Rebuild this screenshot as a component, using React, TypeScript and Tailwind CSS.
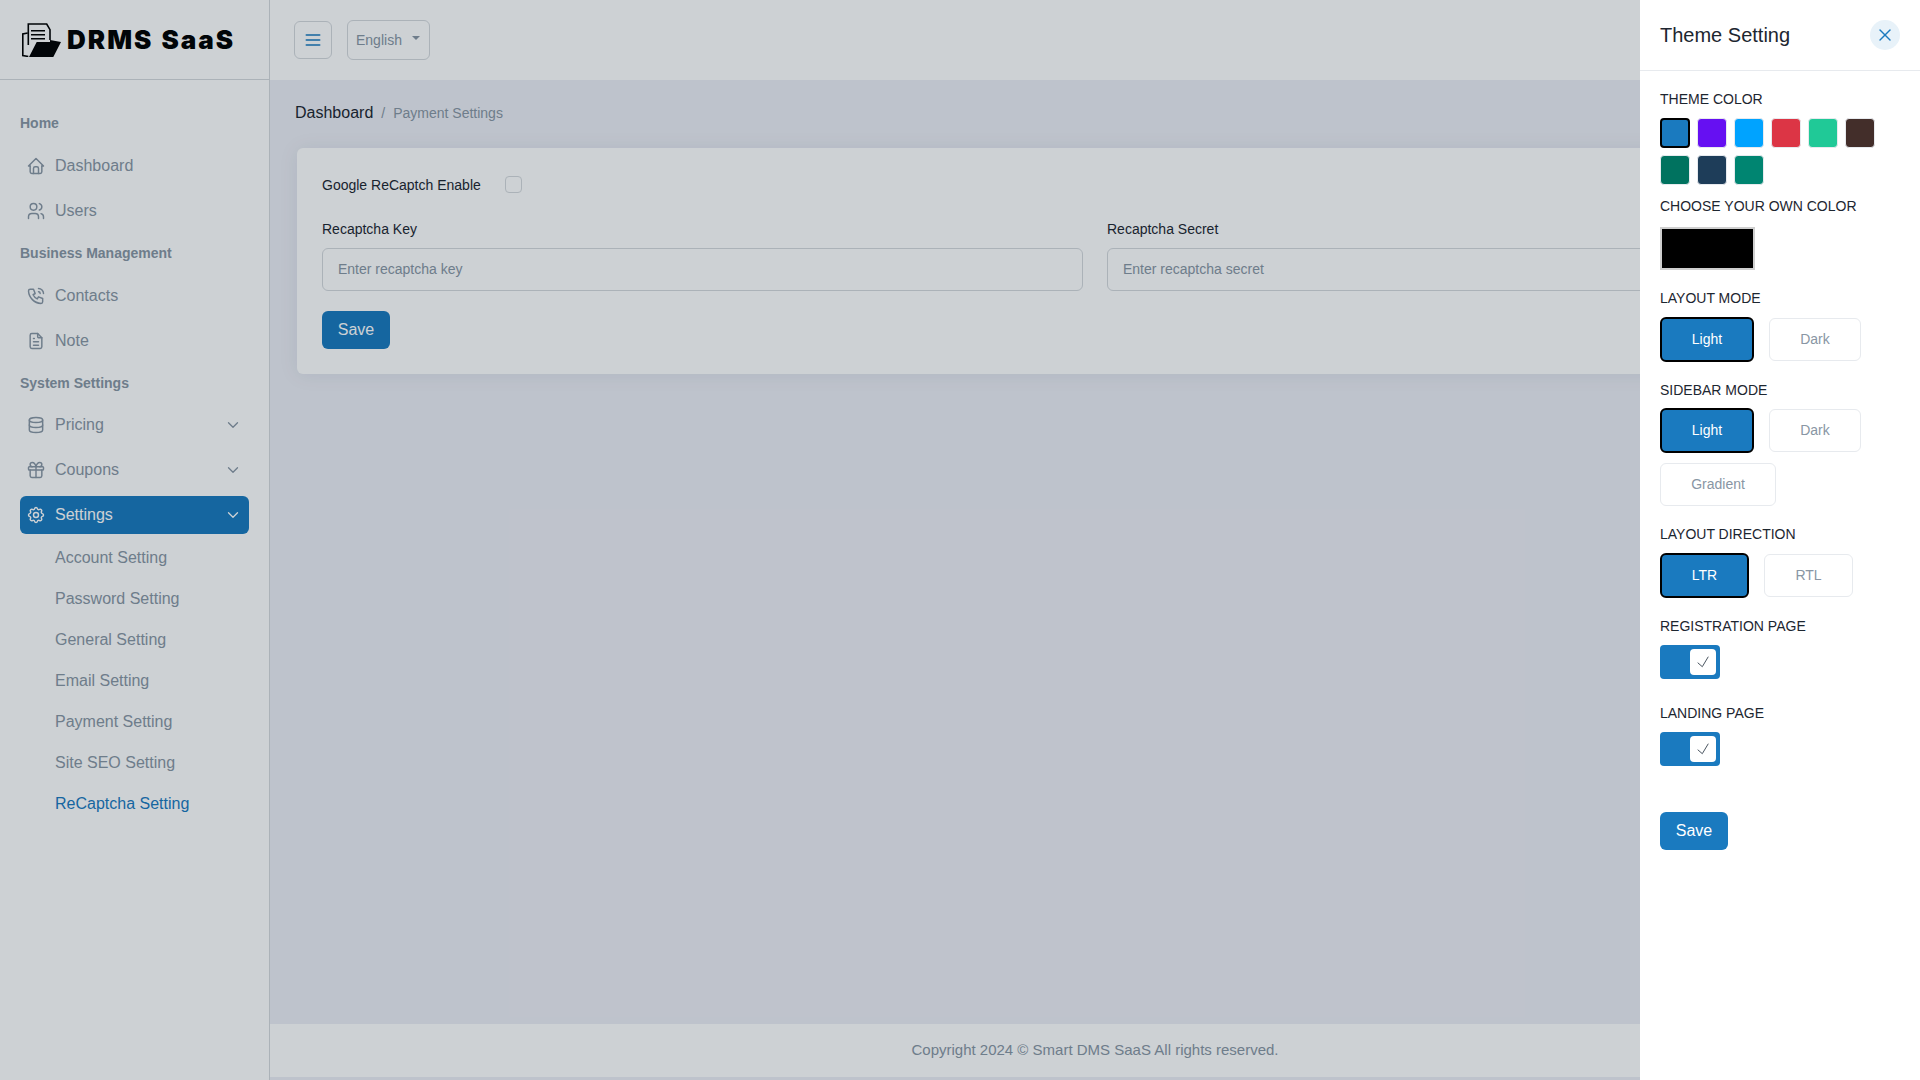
import { TbHome, TbUsers, TbPhoneCall, TbFileText, TbDatabase, TbGift, TbSettings, TbChevronDown, TbMenu2, TbX } from 'react-icons/tb';
import type { IconType } from 'react-icons';

const swatches = ['#1a7abf', '#6610f2', '#00a3ff', '#dc3545', '#20c997', '#432e2a', '#00725f', '#1e3d59', '#008571'];
const subMenu = ['Account Setting', 'Password Setting', 'General Setting', 'Email Setting', 'Payment Setting', 'Site SEO Setting', 'ReCaptcha Setting'];

function Heading({ children, className }: { children: string; className: string }) {
  return <div className={`h-5 text-sm leading-5 font-bold text-[#8996a4] ${className}`}>{children}</div>;
}

function NavItem({ icon: Icon, label, arrow, active }: { icon: IconType; label: string; arrow?: boolean; active?: boolean }) {
  return (
    <div className={`flex h-[38px] items-center rounded-md pl-[6px] pr-[7px] mb-[7px] ${active ? 'bg-[#1a7abf] text-white' : 'text-[#8996a4]'}`}>
      <Icon className="h-5 w-5 shrink-0" strokeWidth={1.75} />
      <span className="ml-[9px] flex-1 text-base">{label}</span>
      {arrow && <TbChevronDown className="h-[18px] w-[18px]" strokeWidth={1.75} />}
    </div>
  );
}

function Sidebar() {
  return (
    <aside className="w-[270px] shrink-0 border-r border-[#d5d9dd] bg-white">
      <div className="flex h-20 items-center border-b border-[#d5d9dd] pl-[22px]">
        <svg width="40" height="34" viewBox="0 0 40 34" className="shrink-0">
          <path d="M5.7 10 .8 11v21.5l5.5 1" fill="none" stroke="#000" strokeWidth="1.6" />
          <path d="M6.3 22V1h18.4L28 6.7V17" fill="#fff" stroke="#000" strokeWidth="1.6" />
          <path d="M9 7.7h14M9 11.7h14M9 15.7h14" stroke="#000" strokeWidth="1.6" />
          <path d="M7 34l7.7-15H28v-2l11 2-7.7 15z" fill="#000" />
        </svg>
        <span className="ml-[5px] font-['Inter',sans-serif] text-[26px] leading-none font-black tracking-[2px] [word-spacing:1px] text-black">DRMS SaaS</span>
      </div>
      <nav className="px-5 pt-[33px]">
        <Heading className="mb-[14px]">Home</Heading>
        <NavItem icon={TbHome} label="Dashboard" />
        <NavItem icon={TbUsers} label="Users" />
        <Heading className="mt-[13px] mb-[14px]">Business Management</Heading>
        <NavItem icon={TbPhoneCall} label="Contacts" />
        <NavItem icon={TbFileText} label="Note" />
        <Heading className="mt-[13px] mb-[13px]">System Settings</Heading>
        <NavItem icon={TbDatabase} label="Pricing" arrow />
        <NavItem icon={TbGift} label="Coupons" arrow />
        <NavItem icon={TbSettings} label="Settings" arrow active />
        <ul className="-mt-1 pl-[35px]">
          {subMenu.map((item) => (
            <li key={item} className={`flex h-[41px] items-center text-base ${item === 'ReCaptcha Setting' ? 'text-[#1a7abf]' : 'text-[#8996a4]'}`}>
              {item}
            </li>
          ))}
        </ul>
      </nav>
    </aside>
  );
}

function Field({ label, placeholder }: { label: string; placeholder: string }) {
  return (
    <div className="w-[761px] shrink-0">
      <div className="mb-[9px] text-sm leading-5 text-[#1d2630]">{label}</div>
      <input placeholder={placeholder} className="h-[43px] w-full rounded-md border border-[#d5d9dd] bg-white px-[15px] pb-[2px] text-sm placeholder:text-[#8996a4]" />
    </div>
  );
}

function Main() {
  return (
    <div className="flex min-w-0 flex-1 flex-col">
      <header className="flex h-20 items-center bg-white pl-6">
        <button className="flex h-[38px] w-[38px] items-center justify-center rounded-md border border-[#d5d9dd] text-[#1a7abf]">
          <TbMenu2 className="h-5 w-5" strokeWidth={2} />
        </button>
        <button className="ml-[15px] flex h-10 w-[83px] items-start rounded-md border border-[#d5d9dd] pl-[8px] text-sm leading-[38px] text-[#8996a4]">
          English
          <span className="ml-[10px] mt-[15px] h-0 w-0 border-x-4 border-t-4 border-x-transparent border-t-[#8996a4]" />
        </button>
      </header>
      <main className="flex-1 bg-[#edeef5] pl-[25px] pt-[23px]">
        <div className="flex h-5 items-center text-sm leading-5">
          <span className="text-base text-[#1d2630]">Dashboard</span>
          <span className="mx-2 text-[#8996a4]">/</span>
          <span className="text-[#8996a4]">Payment Settings</span>
        </div>
        <section className="mt-[25px] ml-[2px] h-[226px] w-[1596px] rounded-md bg-white pl-[25px] pt-[27px] shadow-[0_1px_20px_rgba(27,46,94,0.08)]">
          <div className="flex h-5 items-center text-sm text-[#1d2630]">
            Google ReCaptch Enable
            <span className="ml-6 h-[17px] w-[17px] -translate-y-px rounded border border-[#d5d9dd] bg-white" />
          </div>
          <div className="mt-[24px] flex gap-6">
            <Field label="Recaptcha Key" placeholder="Enter recaptcha key" />
            <Field label="Recaptcha Secret" placeholder="Enter recaptcha secret" />
          </div>
          <button className="mt-[20px] h-[38px] w-[68px] rounded-md bg-[#1a7abf] text-base text-white">Save</button>
        </section>
      </main>
      <footer className="flex h-[53px] items-center justify-center bg-white text-[15px] text-[#8996a4]">
        Copyright 2024 © Smart DMS SaaS All rights reserved.
      </footer>
      <div className="h-[3px] bg-[#edeef5]" />
    </div>
  );
}

function PanelLabel({ children, className }: { children: string; className?: string }) {
  return <div className={`h-5 text-sm leading-5 text-[#1d2630] uppercase ${className ?? ''}`}>{children}</div>;
}

function ModeButton({ label, active, width }: { label: string; active?: boolean; width: string }) {
  return (
    <button className={`flex items-center justify-center rounded-md pb-[2px] text-sm ${width} ${active ? 'h-[45px] border-[2px] border-black bg-[#1a7abf] text-white' : 'h-[43px] border-[1px] border-[#e7eaee] bg-white text-[#8996a4]'}`}>
      {label}
    </button>
  );
}

function Toggle() {
  return (
    <div className="flex h-[34px] w-[60px] items-center justify-end rounded bg-[#1a7abf] pr-1">
      <span className="flex h-[26px] w-[26px] items-center justify-center rounded bg-white">
        <svg width="26" height="26" viewBox="0 0 26 26">
          <path d="M7.7 13.7l4.6 4L18.3 7.7" fill="none" stroke="#4a5560" strokeWidth="1" />
        </svg>
      </span>
    </div>
  );
}

function ThemePanel() {
  return (
    <div className="absolute top-0 right-0 bottom-0 w-[280px] bg-white">
      <div className="flex h-[71px] items-center justify-between border-b border-[#e7eaee] pr-5 pl-5">
        <h5 className="text-xl text-[#1d2630]">Theme Setting</h5>
        <button className="flex h-[30px] w-[30px] items-center justify-center rounded-full bg-[#e8f2f9] text-[#1a7abf]">
          <TbX className="h-5 w-5" strokeWidth={1.75} />
        </button>
      </div>
      <div className="px-5 pt-[18px]">
        <PanelLabel>Theme Color</PanelLabel>
        <div className="mt-[9px] grid w-[240px] grid-cols-[repeat(6,30px)] gap-x-[7px] gap-y-[7px]">
          {swatches.map((color, i) => (
            <span key={color} className={`h-[30px] w-[30px] rounded ${i === 0 ? 'border-[2px] border-black' : 'border-[1px] border-[#e7eaee]'}`} style={{ backgroundColor: color }} />
          ))}
        </div>
        <PanelLabel className="mt-[11px]">Choose your own color</PanelLabel>
        <div className="mt-[11px] h-[43px] w-[95px] border-[2px] border-[#cfcfcf] bg-black" />
        <PanelLabel className="mt-[18px]">Layout Mode</PanelLabel>
        <div className="mt-[9px] flex items-center gap-[15px]">
          <ModeButton label="Light" active width="w-[94px]" />
          <ModeButton label="Dark" width="w-[92px]" />
        </div>
        <PanelLabel className="mt-[18px]">Sidebar Mode</PanelLabel>
        <div className="mt-[8px] flex items-center gap-[15px]">
          <ModeButton label="Light" active width="w-[94px]" />
          <ModeButton label="Dark" width="w-[92px]" />
        </div>
        <div className="mt-[10px]">
          <ModeButton label="Gradient" width="w-[116px]" />
        </div>
        <PanelLabel className="mt-[18px]">Layout Direction</PanelLabel>
        <div className="mt-[9px] flex items-center gap-[15px]">
          <ModeButton label="LTR" active width="w-[89px]" />
          <ModeButton label="RTL" width="w-[89px]" />
        </div>
        <PanelLabel className="mt-[18px]">Registration Page</PanelLabel>
        <div className="mt-[9px]"><Toggle /></div>
        <PanelLabel className="mt-[24px]">Landing Page</PanelLabel>
        <div className="mt-[9px]"><Toggle /></div>
        <button className="mt-[46px] h-[38px] w-[68px] rounded-md bg-[#1a7abf] text-base text-white">Save</button>
      </div>
    </div>
  );
}

export default function App() {
  return (
    <div className="relative flex h-[1080px] w-[1920px] overflow-hidden font-['Liberation_Sans',Arial,sans-serif]">
      <Sidebar />
      <Main />
      {/* backdrop + offcanvas */}
      <div className="absolute inset-0 bg-[#051928]/20" />
      <ThemePanel />
    </div>
  );
}
